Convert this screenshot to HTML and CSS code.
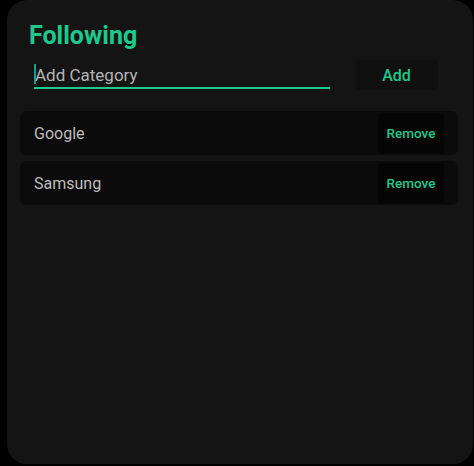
FILE: index.html
```html
<!DOCTYPE html>
<html>
<head>
<meta charset="utf-8">
<link rel="stylesheet" href="styles.css">
</head>
<body>
<div class="card">
  <h1 class="title">Following</h1>
  <div class="add-row">
    <div class="field">
      <input class="input" type="text" placeholder="Add Category">
      <span class="caret"></span>
    </div>
    <button class="add-btn">Add</button>
  </div>
  <ul class="list">
    <li class="item"><span class="name">Google</span><button class="remove">Remove</button></li>
    <li class="item"><span class="name">Samsung</span><button class="remove">Remove</button></li>
  </ul>
</div>
</body>
</html>
```
FILE: styles.css
```css
html, body {
  margin: 0;
  padding: 0;
  background: #000;
  width: 474px;
  height: 466px;
  overflow: hidden;
  font-family: Roboto, "Liberation Sans", sans-serif;
}
.card {
  margin-left: 7px;
  width: 466px;
  height: 464px;
  box-sizing: border-box;
  background: #141414;
  border-radius: 20px;
  padding: 0 15px 0 13px;
  display: flex;
  flex-direction: column;
}
.title {
  margin: 22px 0 0 9px;
  font-size: 25px;
  line-height: 28px;
  font-weight: 700;
  color: #1dc98c;
}
.add-row {
  display: flex;
  align-items: flex-start;
  margin: 10px 0 0 14px;
  gap: 25px;
}
.field {
  position: relative;
  width: 296px;
}
.input {
  display: block;
  width: 100%;
  box-sizing: border-box;
  height: 29px;
  padding: 3px 0 0 1px;
  margin: 0;
  border: none;
  border-bottom: 2px solid #1dc98c;
  background: transparent;
  font-family: Roboto, "Liberation Sans", sans-serif;
  font-size: 17px;
  color: #bdbdbd;
  outline: none;
}
.input::placeholder {
  color: #b4b4b4;
}
.caret {
  position: absolute;
  left: 0;
  top: 4px;
  width: 2px;
  height: 20px;
  background: #1c9c8a;
}
.add-btn {
  width: 83px;
  height: 30px;
  border: none;
  border-radius: 4px;
  background: #101010;
  color: #1dc98c;
  font-family: Roboto, "Liberation Sans", sans-serif;
  font-size: 16px;
  font-weight: 500;
  padding: 0;
}
.list {
  list-style: none;
  margin: 21px 0 0 0;
  padding: 0;
  display: flex;
  flex-direction: column;
  gap: 6px;
}
.item {
  height: 44px;
  box-sizing: border-box;
  background: #0b0b0b;
  border-radius: 6px;
  display: flex;
  align-items: center;
  justify-content: space-between;
  padding: 0 14px 0 14px;
}
.name {
  font-size: 16px;
  color: #bdbdbd;
}
.remove {
  width: 66px;
  height: 40px;
  border: none;
  border-radius: 4px;
  background: #050505;
  color: #1dc98c;
  font-family: Roboto, "Liberation Sans", sans-serif;
  font-size: 13.5px;
  font-weight: 500;
  padding: 0;
}
```
